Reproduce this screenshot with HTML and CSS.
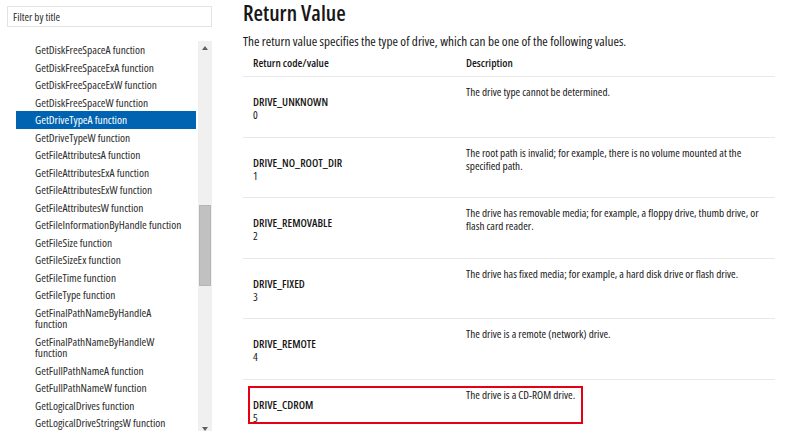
FILE: index.html
```html
<!DOCTYPE html>
<html lang="en">
<head>
<meta charset="utf-8">
<title>GetDriveTypeA function</title>
<link rel="stylesheet" href="styles.css">
</head>
<body>
<div class="page">
  <aside class="sidebar">
    <div class="filter">Filter by title</div>
    <nav class="toc">
      <ul class="toc-list">
        <li><a href="#">GetDiskFreeSpaceA function</a></li>
        <li><a href="#">GetDiskFreeSpaceExA function</a></li>
        <li><a href="#">GetDiskFreeSpaceExW function</a></li>
        <li><a href="#">GetDiskFreeSpaceW function</a></li>
        <li><a href="#" class="selected">GetDriveTypeA function</a></li>
        <li><a href="#">GetDriveTypeW function</a></li>
        <li><a href="#">GetFileAttributesA function</a></li>
        <li><a href="#">GetFileAttributesExA function</a></li>
        <li><a href="#">GetFileAttributesExW function</a></li>
        <li><a href="#">GetFileAttributesW function</a></li>
        <li><a href="#">GetFileInformationByHandle function</a></li>
        <li><a href="#">GetFileSize function</a></li>
        <li><a href="#">GetFileSizeEx function</a></li>
        <li><a href="#">GetFileTime function</a></li>
        <li><a href="#">GetFileType function</a></li>
        <li><a href="#">GetFinalPathNameByHandleA function</a></li>
        <li><a href="#">GetFinalPathNameByHandleW function</a></li>
        <li><a href="#">GetFullPathNameA function</a></li>
        <li><a href="#">GetFullPathNameW function</a></li>
        <li><a href="#">GetLogicalDrives function</a></li>
        <li><a href="#">GetLogicalDriveStringsW function</a></li>
        <li><a href="#">GetLongPathNameA function</a></li>
      </ul>
      <div class="scrollbar">
        <span class="arrow up"></span>
        <span class="thumb"></span>
        <span class="arrow down"></span>
      </div>
    </nav>
  </aside>

  <main class="content">
    <h2 class="title">Return Value</h2>
    <p class="intro">The return value specifies the type of drive, which can be one of the following values.</p>
    <table class="values">
      <thead>
        <tr><th class="col-code">Return code/value</th><th>Description</th></tr>
      </thead>
      <tbody>
        <tr>
          <td class="code"><p><strong>DRIVE_UNKNOWN</strong><br>0</p></td>
          <td class="desc">The drive type cannot be determined.</td>
        </tr>
        <tr>
          <td class="code"><p><strong>DRIVE_NO_ROOT_DIR</strong><br>1</p></td>
          <td class="desc">The root path is invalid; for example, there is no volume mounted at the specified path.</td>
        </tr>
        <tr>
          <td class="code"><p><strong>DRIVE_REMOVABLE</strong><br>2</p></td>
          <td class="desc">The drive has removable media; for example, a floppy drive, thumb drive, or flash card reader.</td>
        </tr>
        <tr>
          <td class="code"><p><strong>DRIVE_FIXED</strong><br>3</p></td>
          <td class="desc">The drive has fixed media; for example, a hard disk drive or flash drive.</td>
        </tr>
        <tr>
          <td class="code"><p><strong>DRIVE_REMOTE</strong><br>4</p></td>
          <td class="desc">The drive is a remote (network) drive.</td>
        </tr>
        <tr>
          <td class="code"><p><strong>DRIVE_CDROM</strong><br>5</p></td>
          <td class="desc">The drive is a CD-ROM drive.</td>
        </tr>
      </tbody>
    </table>
    <div class="highlight"></div>
  </main>
</div>
</body>
</html>
```
FILE: styles.css
```css
* { box-sizing: border-box; }

html, body {
  margin: 0;
  height: 100%;
  overflow: hidden;
  background: #fff;
}

body {
  font-family: "Open Sans", "Liberation Sans", sans-serif;
  font-stretch: 75%;
  color: #171717;
}

.page {
  display: flex;
  gap: 31px;
  height: 100%;
}

/* ---------- sidebar ---------- */
.sidebar {
  width: 212px;
  flex: none;
  padding: 6px 0 0 7px;
  display: flex;
  flex-direction: column;
}

.filter {
  height: 21px;
  border: 1px solid #e3e3e3;
  padding: 0 5px;
  font-size: 11px;
  line-height: 19px;
  color: #2b2b2b;
}

.toc {
  margin: 14px 0 0 9px;
  display: flex;
  gap: 2px;
  height: 404px;
  flex: none;
}

.toc-list {
  list-style: none;
  margin: 0;
  padding: 0;
  width: 180px;
  flex: none;
}

.toc-list a {
  display: block;
  padding: 3px 13px 3px 19px;
  font-size: 11.4px;
  line-height: 11.5px;
  color: #2b2b2b;
  text-decoration: none;
}

.toc-list a.selected {
  background: #0063b1;
  color: #fff;
}

.scrollbar {
  width: 14px;
  background: #f0f0f0;
  display: flex;
  flex-direction: column;
  align-items: center;
}

.arrow {
  width: 0;
  height: 0;
  border-left: 3.5px solid transparent;
  border-right: 3.5px solid transparent;
}

.arrow.up {
  margin-top: 5px;
  border-bottom: 4px solid #606060;
}

.arrow.down {
  margin-top: auto;
  margin-bottom: 14px;
  border-top: 4px solid #606060;
}

.thumb {
  width: 12px;
  height: 81px;
  margin-top: 155px;
  background: #c1c1c1;
  border: 1px solid #b5b5b5;
}

/* ---------- content ---------- */
.content {
  position: relative;
  width: 532px;
  flex: none;
}

.title {
  margin: 0;
  font-size: 21.8px;
  line-height: 25px;
  font-weight: 600;
}

.intro {
  margin: 8px 0 0;
  font-size: 13.2px;
  line-height: 16px;
}

.values {
  width: 100%;
  border-collapse: collapse;
  font-size: 11.2px;
  line-height: 13px;
}

.values th {
  text-align: left;
  font-weight: 600;
  padding: 7px 10px;
}

.values .col-code {
  width: 213px;
}

.values td {
  vertical-align: top;
  border-top: 1px solid #e8e8e8;
  padding: 8px 6px 8px 10px;
}

.values .code p {
  margin: 10px 0 7.5px;
}

.values strong {
  font-weight: 600;
}

.highlight {
  position: absolute;
  left: 5px;
  top: 386px;
  width: 335px;
  height: 38px;
  border: 2px solid #e60012;
}
```
